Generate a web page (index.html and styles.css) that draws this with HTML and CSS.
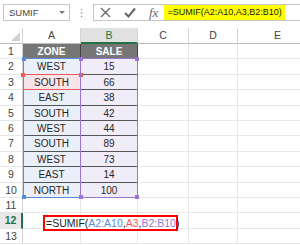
FILE: index.html
```html
<!DOCTYPE html>
<html lang="en">
<head>
	<meta charset="UTF-8">
	<title>SUMIF</title>
	<link rel="stylesheet" href="styles.css">
</head>
<body>
	<div class="top">
		<div class="namebox"><span>SUMIF</span><i class="caret"></i></div>
		<svg class="dots" width="3" height="10" viewBox="0 0 3 10"><circle cx="1.5" cy="1.5" r="0.8"/><circle cx="1.5" cy="5" r="0.8"/><circle cx="1.5" cy="8.5" r="0.8"/></svg>
		<div class="fbar">
			<svg class="ico" width="11" height="11" viewBox="0 0 11 11"><path d="M1 1 L10 10 M10 1 L1 10"/></svg>
			<svg class="ico chk" width="12" height="11" viewBox="0 0 12 11"><path d="M1 6 L4.5 9.5 L11 1.5"/></svg>
			<span class="fx">fx</span>
			<div class="fhl">=SUMIF(A2:A10,A3,B2:B10)</div>
		</div>
	</div>

	<div class="sheet">
		<div class="corner"><i></i></div>
		<div class="ch">A</div>
		<div class="ch sel">B</div>
		<div class="ch">C</div>
		<div class="ch">D</div>
		<div class="ch">E</div>

		<div class="rh">1</div><div class="c th">ZONE</div><div class="c th">SALE</div><div class="c"></div><div class="c"></div><div class="c"></div>
		<div class="rh">2</div><div class="c za">WEST</div><div class="c zb">15</div><div class="c"></div><div class="c"></div><div class="c"></div>
		<div class="rh">3</div><div class="c za red">SOUTH</div><div class="c zb">66</div><div class="c"></div><div class="c"></div><div class="c"></div>
		<div class="rh">4</div><div class="c za">EAST</div><div class="c zb">38</div><div class="c"></div><div class="c"></div><div class="c"></div>
		<div class="rh">5</div><div class="c za">SOUTH</div><div class="c zb">42</div><div class="c"></div><div class="c"></div><div class="c"></div>
		<div class="rh">6</div><div class="c za">WEST</div><div class="c zb">44</div><div class="c"></div><div class="c"></div><div class="c"></div>
		<div class="rh">7</div><div class="c za">SOUTH</div><div class="c zb">89</div><div class="c"></div><div class="c"></div><div class="c"></div>
		<div class="rh">8</div><div class="c za">WEST</div><div class="c zb">73</div><div class="c"></div><div class="c"></div><div class="c"></div>
		<div class="rh">9</div><div class="c za">EAST</div><div class="c zb">14</div><div class="c"></div><div class="c"></div><div class="c"></div>
		<div class="rh">10</div><div class="c za">NORTH</div><div class="c zb">100</div><div class="c"></div><div class="c"></div><div class="c"></div>
		<div class="rh">11</div><div class="c"></div><div class="c"></div><div class="c"></div><div class="c"></div><div class="c"></div>
		<div class="rh sel">12</div><div class="c"></div><div class="c"></div><div class="c"></div><div class="c"></div><div class="c"></div>
		<div class="rh">13</div><div class="c"></div><div class="c"></div><div class="c"></div><div class="c"></div><div class="c"></div>

		<!-- range outlines of the formula being edited -->
		<div class="rng rng-a"><b class="h tl"></b><b class="h bl"></b></div>
		<div class="rng rng-r"><b class="h tl"></b><b class="h tr"></b></div>
		<div class="rng rng-b"><b class="h tl"></b><b class="h tr"></b><b class="h bl"></b><b class="h br"></b></div>

		<div class="edit">=SUMIF(<span class="blue">A2:A10</span>,<span class="rd">A3</span>,<span class="purple">B2:B10</span>)</div>
	</div>
</body>
</html>
```

FILE: styles.css
```css
*{
	margin: 0;
	padding: 0;
	box-sizing: border-box;
}
body,html{
	width: 300px;
	height: 245px;
	overflow: hidden;
	background: #fff;
	font-family: "Liberation Sans", Arial, sans-serif;
	color: #262626;
}
.top{
	height: 28px;
	display: flex;
	align-items: flex-start;
	padding-top: 4px;
}
.namebox{
	margin-left: 3px;
	width: 67px;
	height: 17px;
	border: 1px solid #c6c6c6;
	display: flex;
	align-items: center;
	justify-content: space-between;
	padding: 0 4px 0 5px;
	font-size: 9.5px;
	color: #444;
}
.caret{
	width: 0;
	height: 0;
	border-left: 3px solid transparent;
	border-right: 3px solid transparent;
	border-top: 3px solid #777;
}
.dots{
	margin: 4px 0 0 10px;
	fill: #999;
}
.fbar{
	margin-left: 10px;
	flex: 1;
	height: 17px;
	border: 1px solid #c6c6c6;
	border-right: none;
	display: flex;
	align-items: center;
}
.ico{
	margin-left: 6px;
	fill: none;
	stroke: #666;
	stroke-width: 1.3;
}
.chk{
	margin-left: 13px;
	stroke-width: 2;
}
.fx{
	margin-left: 13px;
	font-family: "Liberation Serif", serif;
	font-style: italic;
	font-size: 13px;
	color: #666;
	line-height: 1;
}
.fhl{
	margin-left: 6px;
	width: 121px;
	height: 15px;
	background: #ffff00;
	font-size: 9px;
	line-height: 15px;
	padding-left: 3px;
	color: #222;
	white-space: nowrap;
}
.sheet{
	position: relative;
	display: grid;
	width: 318px;
	grid-template-columns: 23px 58px 57px 51px 49px 80px;
	grid-template-rows: 16px repeat(13, 15.4px);
}
.corner{
	border-right: 1px solid #d4d4d4;
	border-bottom: 1px solid #bdbdbd;
	display: flex;
	justify-content: flex-end;
	align-items: flex-end;
	padding: 0 2px 2px 0;
}
.corner i{
	width: 0;
	height: 0;
	border-left: 9px solid transparent;
	border-bottom: 9px solid #d0d0d0;
}
.ch{
	border-right: 1px solid #d4d4d4;
	border-bottom: 1px solid #bdbdbd;
	font-size: 10.5px;
	color: #444;
	text-align: center;
	line-height: 15px;
}
.ch.sel{
	background: #e1e1e1;
	color: #217346;
	border-bottom: 2px solid #217346;
}
.rh{
	border-right: 1px solid #d4d4d4;
	border-bottom: 1px solid #e6e6e6;
	font-size: 10.5px;
	color: #444;
	text-align: center;
	line-height: 15px;
}
.rh.sel{
	background: #e9e9e9;
	color: #217346;
	font-weight: bold;
	border-right: 2px solid #217346;
}
.c{
	border-right: 1px solid #e8e8e8;
	border-bottom: 1px solid #e8e8e8;
	font-size: 10px;
	text-align: center;
	line-height: 15px;
	white-space: nowrap;
}
.c.th{
	background: #767676;
	color: #fff;
	font-weight: bold;
	border-bottom-color: #555;
	border-right-color: #444;
}
.c.za{
	background: #eaf0fa;
	border-bottom-color: #555;
}
.c.za.red{
	background: #f6e4e8;
}
.c.zb{
	background: #f1edf8;
	border-bottom-color: #555;
}
.rng{
	position: absolute;
	top: -1px;
	left: 0;
	right: 0;
	bottom: 0;
	pointer-events: none;
}
.rng-a{
	grid-column: 2 / 3;
	grid-row: 3 / 12;
	border: 1px solid #5b8bd9;
	border-right: none;
}
.rng-r{
	grid-column: 2 / 3;
	grid-row: 4 / 5;
	border-top: 1px solid #ef5a5a;
	border-bottom: 1px solid #ef5a5a;
}
.rng-b{
	grid-column: 3 / 4;
	grid-row: 3 / 12;
	left: -1px;
	border: 1px solid #9a73d6;
}
.h{
	position: absolute;
	width: 4px;
	height: 4px;
}
.rng-a .h{ background: #5b8bd9; }
.rng-r .h{ background: #ef5a5a; }
.rng-b .h{ background: #9a73d6; }
.tl{ left: -2px; top: -2px; }
.tr{ right: -2px; top: -2px; }
.bl{ left: -2px; bottom: -2px; }
.br{ right: -2px; bottom: -2px; }
.edit{
	position: absolute;
	grid-column: 2 / 7;
	grid-row: 13 / 14;
	top: 2px;
	left: 20px;
	width: 135px;
	height: 16px;
	border: 2px solid #ff0000;
	background: #fff;
	font-size: 10.5px;
	line-height: 12px;
	padding-left: 1px;
	white-space: nowrap;
	color: #222;
}
.blue{ color: #5b8bd9; }
.rd{ color: #ef5a5a; }
.purple{ color: #9a73d6; }
```
